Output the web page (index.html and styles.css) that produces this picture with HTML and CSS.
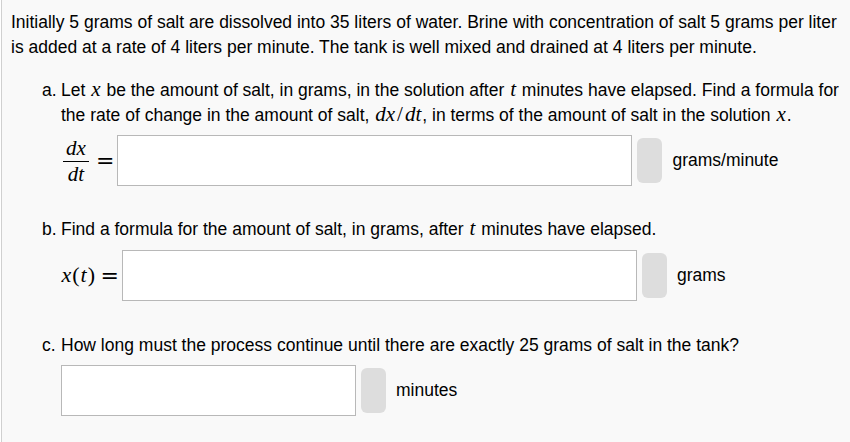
FILE: index.html
```html
<!DOCTYPE html>
<html>
<head>
<meta charset="utf-8">
<link rel="stylesheet" href="styles.css">
</head>
<body>
<div class="problem">
  <p class="intro">Initially 5 grams of salt are dissolved into 35 liters of water. Brine with concentration of salt 5 grams per liter is added at a rate of 4 liters per minute. The tank is well mixed and drained at 4 liters per minute.</p>

  <div class="part part-a">
    <div class="part-text"><span class="label">a.</span><span class="body">Let <span class="m">x</span> be the amount of salt, in grams, in the solution after <span class="m">t</span> minutes have elapsed. Find a formula for the rate of change in the amount of salt, <span class="m">dx</span><span class="mr">/</span><span class="m">dt</span>, in terms of the amount of salt in the solution <span class="m">x</span>.</span></div>
    <div class="answer-row row-a">
      <span class="frac"><span class="num m">dx</span><span class="den m">dt</span></span>
      <span class="eq">=</span>
      <span class="field wide"></span>
      <span class="btn"></span>
      <span class="unit">grams/minute</span>
    </div>
  </div>

  <div class="part part-b">
    <div class="part-text"><span class="label">b.</span><span class="body">Find a formula for the amount of salt, in grams, after <span class="m">t</span> minutes have elapsed.</span></div>
    <div class="answer-row row-b">
      <span class="lhs"><span class="m">x</span><span class="mr">(</span><span class="m">t</span><span class="mr">)</span></span>
      <span class="eq">=</span>
      <span class="field wide"></span>
      <span class="btn"></span>
      <span class="unit">grams</span>
    </div>
  </div>

  <div class="part part-c">
    <div class="part-text"><span class="label">c.</span><span class="body">How long must the process continue until there are exactly 25 grams of salt in the tank?</span></div>
    <div class="answer-row row-c">
      <span class="field narrow"></span>
      <span class="btn"></span>
      <span class="unit">minutes</span>
    </div>
  </div>
</div>
</body>
</html>
```

FILE: styles.css
```css
html, body {
  margin: 0;
  padding: 0;
  background: #ffffff;
}
body {
  padding-left: 1px;
  font-family: "Liberation Sans", Arial, sans-serif;
  font-size: 17.5px;
  color: #000;
}
.problem {
  border-left: 1px solid #d0d0d0;
  background: #f9f9f9;
  min-height: 442px;
  box-sizing: border-box;
  padding: 10px 4px 0 9px;
}
.intro {
  margin: 0;
  line-height: 25px;
}
.part {
  padding-left: 31px;
}
.part-a { margin-top: 18px; }
.part-b { margin-top: 31px; }
.part-c { margin-top: 32px; }
.part-text {
  display: flex;
  line-height: 25px;
}
.label {
  flex: 0 0 19px;
}
.body {
  flex: 1;
}
.m {
  font-family: "Liberation Serif", "Times New Roman", serif;
  font-style: italic;
  font-size: 21px;
  line-height: 1;
  padding: 0 1px;
}
.mr {
  font-family: "Liberation Serif", "Times New Roman", serif;
  font-size: 21px;
  line-height: 1;
  padding: 0 1px;
}
.answer-row {
  display: flex;
  align-items: center;
  margin-top: 7px;
  padding-left: 19px;
}
.row-b { margin-top: 8px; }
.frac {
  display: inline-flex;
  flex-direction: column;
  align-items: center;
  margin-left: 2px;
  width: 26px;
}
.frac .m {
  font-size: 21px;
  padding: 0;
}
.frac .num {
  line-height: 20px;
  padding-bottom: 3px;
}
.frac .den {
  border-top: 1px solid #000;
  align-self: stretch;
  text-align: center;
  line-height: 20px;
  padding-top: 2px;
}
.eq {
  font-family: "DejaVu Serif", serif;
  font-size: 22px;
  margin: 0 3px 0 7px;
}
.row-b .eq {
  margin: 0 3px 0 5px;
}
.lhs {
  white-space: nowrap;
}
.lhs .m, .lhs .mr {
  font-size: 22px;
  padding: 0 0.5px;
}
.field {
  display: block;
  height: 51px;
  box-sizing: border-box;
  border: 1px solid #b8b8b8;
  background: #fff;
}
.wide { width: 515px; }
.narrow { width: 295px; }
.btn {
  display: block;
  width: 25px;
  height: 45px;
  margin-left: 5px;
  border-radius: 6px;
  background: #dddddd;
}
.unit {
  margin-left: 10px;
}
```
